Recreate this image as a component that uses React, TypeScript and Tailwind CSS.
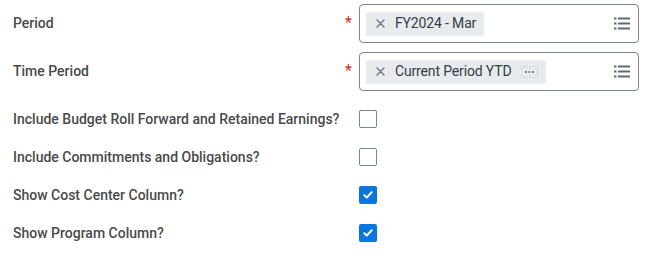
import React from "react";

const ListIcon = () => (
  <svg width="16" height="13" viewBox="0 0 16 13" fill="#5e6a75">
    <rect x="0" y="0.5" width="2.5" height="2" />
    <rect x="4" y="0.5" width="12" height="2" />
    <rect x="0" y="5.5" width="2.5" height="2" />
    <rect x="4" y="5.5" width="12" height="2" />
    <rect x="0" y="10.5" width="2.5" height="2" />
    <rect x="4" y="10.5" width="12" height="2" />
  </svg>
);

const XIcon = () => (
  <svg width="9" height="9" viewBox="0 0 9 9" stroke="#6b7680" strokeWidth="1.4" strokeLinecap="round">
    <path d="M1 1 L8 8 M8 1 L1 8" />
  </svg>
);

const Chip = ({ text, more }: { text: string; more?: boolean }) => (
  <div className="flex items-center h-6 rounded-[3px] bg-[#e8ebee] pl-[10px] pr-[8px] gap-[10px]">
    <XIcon />
    <span className="text-[14px] tracking-[-0.15px] text-[#333d47]">{text}</span>
    {more && (
      <span className="flex items-center justify-center w-[17px] h-[12px] rounded-[2px] border border-[#d6dbdf]">
        <svg width="9" height="2" viewBox="0 0 9 2" fill="#7b858f">
          <rect x="0" y="0" width="2" height="2" />
          <rect x="3.5" y="0" width="2" height="2" />
          <rect x="7" y="0" width="2" height="2" />
        </svg>
      </span>
    )}
  </div>
);

const SelectRow = ({ label, chip, more }: { label: string; chip: string; more?: boolean }) => (
  <div className="flex items-center h-[39px]">
    <div className="w-[332px] pl-[13px] text-[14px] font-medium text-[#4a4a4a]">{label}</div>
    <div className="w-[27px] text-[#de2e21] text-[16px] pl-[13px] -mt-[2px]">*</div>
    <div className="flex items-center justify-between w-[280px] h-[39px] rounded-[4px] border border-[#7b858f] pl-[6px] pr-[8px]">
      <Chip text={chip} more={more} />
      <ListIcon />
    </div>
  </div>
);

const Check = ({ checked }: { checked: boolean }) =>
  checked ? (
    <div className="w-[18px] h-[18px] rounded-[2px] bg-[#0875e1] flex items-center justify-center">
      <svg width="10" height="8" viewBox="0 0 10 8" fill="none" stroke="white" strokeWidth="2" strokeLinecap="round" strokeLinejoin="round">
        <path d="M1.3 4.2 L3.8 6.5 L8.7 1.3" />
      </svg>
    </div>
  ) : (
    <div className="w-[18px] h-[18px] rounded-[2px] border border-[#7b858f] bg-white" />
  );

const CheckRow = ({ label, checked }: { label: string; checked: boolean }) => (
  <div className="flex items-center h-[38px]">
    <div className="w-[359px] pl-[13px] text-[14px] font-medium text-[#4a4a4a]">{label}</div>
    <Check checked={checked} />
  </div>
);

export default function App() {
  return (
    <div className="w-[651px] h-[256px] bg-white pt-[4px] flex flex-col" style={{ fontFamily: "Roboto, 'Liberation Sans', sans-serif" }}>
      <div className="flex flex-col gap-[9px]">
        <SelectRow label="Period" chip="FY2024 - Mar" />
        <SelectRow label="Time Period" chip="Current Period YTD" more />
      </div>
      <div className="mt-[9px] flex flex-col">
        <CheckRow label="Include Budget Roll Forward and Retained Earnings?" checked={false} />
        <CheckRow label="Include Commitments and Obligations?" checked={false} />
        <CheckRow label="Show Cost Center Column?" checked={true} />
        <CheckRow label="Show Program Column?" checked={true} />
      </div>
    </div>
  );
}
